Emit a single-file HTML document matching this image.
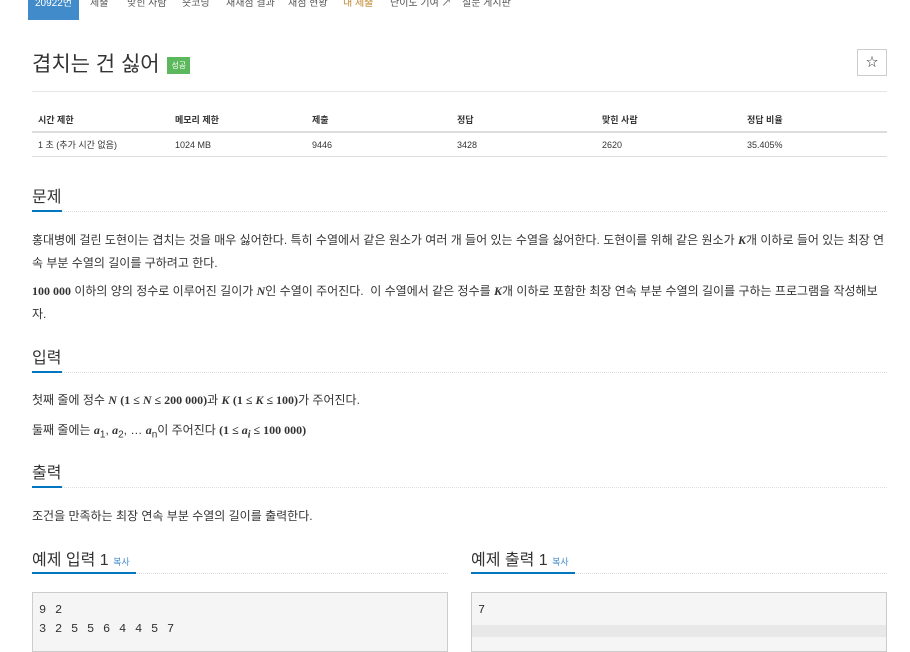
<!DOCTYPE html>
<html><head><meta charset="utf-8"><style>
body{margin:0;width:910px;height:633px;overflow:hidden;background:#fff;font-family:"Liberation Sans","Noto Sans CJK KR",sans-serif;color:#333;font-size:12px}
.nav div{position:absolute;top:0;line-height:8px;height:20px;color:#555;font-size:10px;white-space:nowrap}
.nav .a{background:#428bca;color:#fff;left:28px;width:51px;text-align:center}
h1{position:absolute;left:32px;top:48px;margin:0;font-size:21px;font-weight:normal;color:#333}
.badge{display:inline-block;background:#5cb85c;color:#fff;font-size:8px;padding:3px 4px;vertical-align:3px;margin-left:2px}
.star{position:absolute;left:857px;top:49px;width:30px;height:27px;border:1px solid #ccc;box-sizing:border-box;text-align:center;line-height:25px;font-size:12px}
.hr{position:absolute;left:32px;width:855px;height:1px;background:#e6e6e6}
table{position:absolute;left:32px;top:108px;width:855px;border-collapse:collapse;font-size:9px}
th{text-align:left;font-weight:bold;padding:4px 6px;height:15px;border-bottom:2px solid #ddd}
td{padding:4px 6px;height:15px;border-bottom:1px solid #ddd}
h2{position:absolute;left:32px;margin:0;font-size:16px;font-weight:normal;color:#333}
.ul{position:absolute;left:32px;height:1px;width:855px;border-top:1px dotted #ddd}
.bl{position:absolute;height:2px;background:#0076c0}
p{position:absolute;left:32px;margin:0;font-size:12px;width:858px;line-height:23px;color:#333}
i{font-family:"Liberation Serif",serif;font-weight:bold}
b.m{font-family:"Liberation Serif",serif}
.pre{position:absolute;top:592px;height:60px;background:#f5f5f5;border:1px solid #ccc;box-sizing:border-box;font-family:"Liberation Mono",monospace;font-size:12px;padding:8px 6px;line-height:19px;letter-spacing:0.8px}
.s{font-size:9px;color:#428bca}
</style></head><body>
<div class="nav"><div class="a">20922번</div><div style="left:90px">제출</div><div style="left:127px">맞힌 사람</div><div style="left:182px">숏코딩</div><div style="left:226px">재채점 결과</div><div style="left:288px">채점 현황</div><div style="left:343px;color:#c0852d">내 제출</div><div style="left:390px">난이도 기여 ↗</div><div style="left:462px">질문 게시판</div></div>
<h1>겹치는 건 싫어 <span class="badge">성공</span></h1>
<div class="star">☆</div>
<div class="hr" style="top:91px"></div>
<table><tr><th style="width:125px">시간 제한</th><th style="width:125px">메모리 제한</th><th style="width:133px">제출</th><th style="width:133px">정답</th><th style="width:133px">맞힌 사람</th><th>정답 비율</th></tr>
<tr><td>1 초 (추가 시간 없음)</td><td>1024 MB</td><td>9446</td><td>3428</td><td>2620</td><td>35.405%</td></tr></table>
<h2 style="top:183px">문제</h2><div class="ul" style="top:211px"></div><div class="bl" style="left:32px;width:30px;top:210px"></div>
<p style="top:229px">홍대병에 걸린 도현이는 겹치는 것을 매우 싫어한다. 특히 수열에서 같은 원소가 여러 개 들어 있는 수열을 싫어한다. 도현이를 위해 같은 원소가 <i>K</i>개 이하로 들어 있는 최장 연속 부분 수열의 길이를 구하려고 한다.</p>
<p style="top:280px"><b class="m">100 000</b> 이하의 양의 정수로 이루어진 길이가 <i>N</i>인 수열이 주어진다. &nbsp;이 수열에서 같은 정수를 <i>K</i>개 이하로 포함한 최장 연속 부분 수열의 길이를 구하는 프로그램을 작성해보자.</p>
<h2 style="top:344px">입력</h2><div class="ul" style="top:372px"></div><div class="bl" style="left:32px;width:30px;top:371px"></div>
<p style="top:389px">첫째 줄에 정수 <i>N</i> <b class="m">(1 ≤ <i>N</i> ≤ 200 000)</b>과 <i>K</i> <b class="m">(1 ≤ <i>K</i> ≤ 100)</b>가 주어진다.</p>
<p style="top:419px">둘째 줄에는 <i>a</i><sub>1</sub>, <i>a</i><sub>2</sub>, … <i>a</i><sub>n</sub>이 주어진다 <b class="m">(1 ≤ <i>a<sub>i</sub></i> ≤ 100 000)</b></p>
<h2 style="top:459px">출력</h2><div class="ul" style="top:487px"></div><div class="bl" style="left:32px;width:30px;top:486px"></div>
<p style="top:505px">조건을 만족하는 최장 연속 부분 수열의 길이를 출력한다.</p>
<h2 style="top:546px">예제 입력 1 <span class="s">복사</span></h2><div class="ul" style="top:573px;width:416px"></div><div class="bl" style="left:32px;width:104px;top:572px"></div>
<h2 style="top:546px;left:471px">예제 출력 1 <span class="s">복사</span></h2><div class="ul" style="top:573px;left:471px;width:416px"></div><div class="bl" style="left:471px;width:104px;top:572px"></div>
<div class="pre" style="left:32px;width:416px">9 2<br>3 2 5 5 6 4 4 5 7</div>
<div class="pre" style="left:471px;width:416px">7<div style="position:absolute;left:0;right:0;top:32px;height:12px;background:#e8e8e8"></div></div>
</body></html>
